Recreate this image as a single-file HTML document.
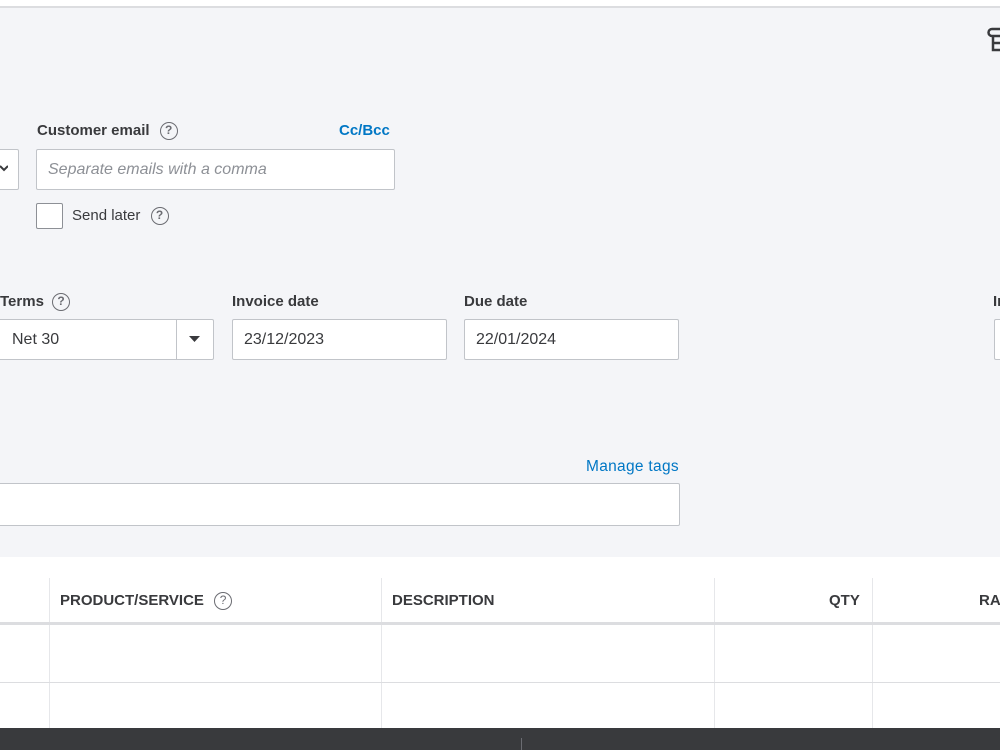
<!DOCTYPE html>
<html><head><style>
*{margin:0;padding:0;box-sizing:border-box}
body{width:1000px;height:750px;overflow:hidden;background:#f4f5f8;font-family:"Liberation Sans",sans-serif;position:relative;color:#393a3d}
.a{position:absolute}
.lbl{font-size:15px;font-weight:bold;color:#393a3d}
.inp{position:absolute;background:#fff;border:1px solid #c1c4c9;border-radius:2px;font-size:16px;color:#393a3d;padding-left:11px;display:flex;align-items:center}
.q{display:inline-block;width:18px;height:18px;border:1.5px solid #6b6c72;border-radius:50%;font-size:12px;text-align:center;line-height:15px;color:#6b6c72;font-weight:bold;vertical-align:middle}
.link{color:#0077c5;font-size:15px}
.th{position:absolute;top:592px;font-size:15px;font-weight:bold;color:#393a3d}
.vl{position:absolute;top:578px;height:150px;width:1px;background:#e6e7ea}
</style></head><body>
<div class="a" style="left:0;top:0;width:1000px;height:6px;background:#fff"></div>
<div class="a" style="left:0;top:6px;width:1000px;height:2px;background:#dcdde0"></div>
<svg class="a" style="left:985px;top:26px" width="15" height="28" viewBox="0 0 15 28"><path d="M15 3H7a3.5 3.5 0 0 0 0 7h8M8 10v14h7M8 17h7" fill="none" stroke="#393a3d" stroke-width="2.5"/></svg>

<div class="a lbl" style="left:37px;top:122px">Customer email <span class="q" style="margin-left:6px">?</span></div>
<div class="a link" style="left:339px;top:122px;font-weight:bold">Cc/Bcc</div>
<div class="inp" style="left:-5px;top:149px;width:24px;height:41px"></div>
<svg class="a" style="left:0;top:164px" width="8" height="8"><path d="M0 2l4 4 4-4" fill="none" stroke="#393a3d" stroke-width="2"/></svg>
<div class="inp" style="left:36px;top:149px;width:359px;height:41px;font-style:italic;color:#8d9096">Separate emails with a comma</div>
<div class="a" style="left:36px;top:203px;width:27px;height:26px;border:1px solid #8d9096;border-radius:2px;background:#fff"></div>
<div class="a" style="left:72px;top:207px;font-size:15px;color:#393a3d">Send later <span class="q" style="margin-left:6px">?</span></div>

<div class="a lbl" style="left:0;top:293px">Terms <span class="q" style="margin-left:4px">?</span></div>
<div class="a lbl" style="left:232px;top:293px">Invoice date</div>
<div class="a lbl" style="left:464px;top:293px">Due date</div>
<div class="a lbl" style="left:993px;top:293px">In</div>
<div class="inp" style="left:-5px;top:319px;width:219px;height:41px;padding-left:16px">Net 30</div>
<div class="a" style="left:176px;top:320px;width:1px;height:39px;background:#c1c4c9"></div>
<svg class="a" style="left:189px;top:336px" width="11" height="7"><path d="M0 0h11L5.5 6z" fill="#393a3d"/></svg>
<div class="inp" style="left:232px;top:319px;width:215px;height:41px">23/12/2023</div>
<div class="inp" style="left:464px;top:319px;width:215px;height:41px">22/01/2024</div>
<div class="inp" style="left:994px;top:319px;width:20px;height:41px"></div>

<div class="a link" style="left:586px;top:458px;font-size:15.5px;letter-spacing:0.3px">Manage tags</div>
<div class="inp" style="left:-5px;top:483px;width:685px;height:43px"></div>

<div class="a" style="left:0;top:557px;width:1000px;height:171px;background:#fff"></div>
<div class="vl" style="left:49px"></div><div class="vl" style="left:381px"></div><div class="vl" style="left:714px"></div><div class="vl" style="left:872px"></div>
<div class="a" style="left:0;top:622px;width:1000px;height:3px;background:#dcdde0"></div>
<div class="a" style="left:0;top:682px;width:1000px;height:1px;background:#dcdde0"></div>
<div class="th" style="left:60px">PRODUCT/SERVICE <span class="q" style="margin-left:6px;font-weight:normal">?</span></div>
<div class="th" style="left:392px">DESCRIPTION</div>
<div class="th" style="left:829px">QTY</div>
<div class="th" style="left:979px">RA</div>
<div class="a" style="left:0;top:728px;width:1000px;height:22px;background:#393a3d"></div>
<div class="a" style="left:521px;top:738px;width:1px;height:12px;background:#6b6c72"></div>
</body></html>
